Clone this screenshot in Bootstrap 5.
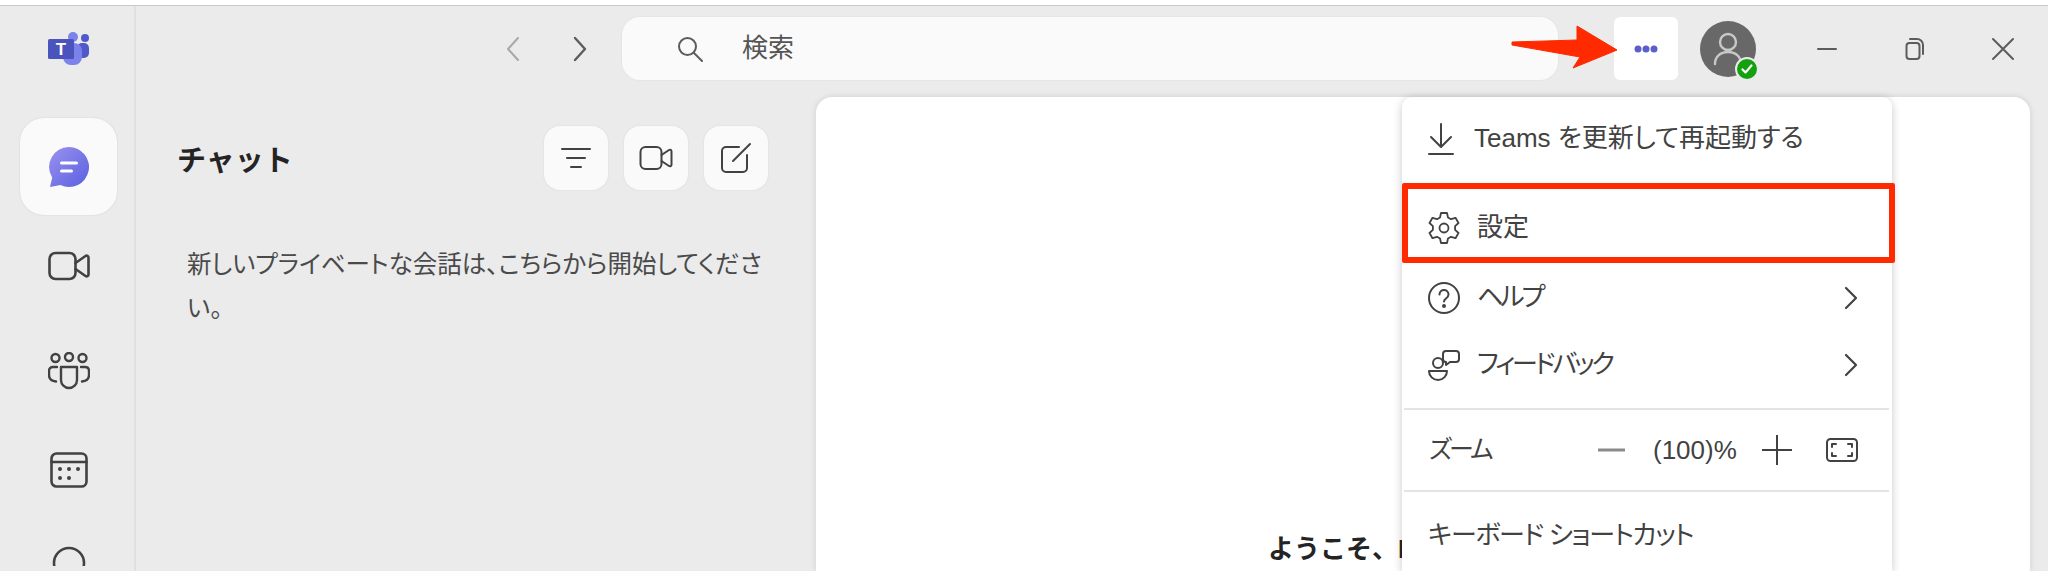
<!DOCTYPE html>
<html lang="ja">
<head>
    <meta charset="UTF-8">
    <meta name="viewport" content="width=device-width, initial-scale=1.0">
    <title>Teams</title>
    <link href="https://cdn.jsdelivr.net/npm/bootstrap@5.3.0/dist/css/bootstrap.min.css" rel="stylesheet">
    <style>
        html, body { height: 100%; overflow: hidden; }
        body { background: #ebebeb; color: #424242; font-family: "Liberation Sans", "Noto Sans CJK JP", sans-serif; font-size: 26px; font-feature-settings: "palt"; }
        svg { display: block; }
        .ico { fill: none; stroke: #424242; stroke-width: 2; stroke-linecap: round; stroke-linejoin: round; }
        .thin { stroke: #5c5c5c; }
        .top-strip { height: 6px; background: #fff; border-bottom: 1px solid #c9c9c9; flex: none; }
        .app-body { min-height: 0; overflow: hidden; }
        .rail { width: 136px; flex: none; border-right: 2px solid #e0e0e0; overflow: hidden; }
        .rail-logo { height: 86px; flex: none; padding-left: 3px; }
        .rail-item { width: 97px; height: 97px; margin-bottom: 5px; margin-left: 20px; flex: none; }
        .rail-item.active { background: #fafafa; border-radius: 24px; box-shadow: 0 0 2px rgba(0,0,0,.12); }
        .rail-item.gap-sm { margin-bottom: 2px; }
        .rail-item.gap-lg { margin-bottom: 8px; }
        .rail-last { height: 40px; padding-top: 19px; overflow: hidden; }
        .rail-spacer { height: 26px; flex: none; }
        .top-bar { height: 91px; padding-left: 357px; padding-bottom: 6px; flex: none; }
        .nav-btn { width: 40px; margin-right: 27px; }
        .search-box { width: 936px; height: 63px; margin-left: -5px; background: #fafafa; border-radius: 18px; padding-left: 55px; gap: 39px; color: #555; box-shadow: 0 0 2px rgba(0,0,0,.08); }
        .more-btn { width: 64px; height: 63px; margin-left: 56px; background: #fff; border-radius: 6px; }
        .avatar { width: 56px; height: 56px; margin-left: 22px; background: #686868; border-radius: 50%; position: relative; }
        .avatar-status { position: absolute; right: -3px; bottom: -4px; width: 24px; height: 24px; border-radius: 50%; background: #13a10e; border: 2px solid #ebebeb; }
        .win-btn { width: 88px; }
        .win-first { margin-left: 27px; }
        .content-row { min-height: 0; }
        .chat-pane { width: 680px; flex: none; }
        .chat-head { padding: 29px 48px 0 41px; }
        .chat-title { font-size: 29px; font-weight: 700; color: #242424; font-feature-settings: normal; margin-top: 7px; }
        .tool-btn { width: 64px; height: 64px; background: #fafafa; border-radius: 16px; box-shadow: 0 0 2px rgba(0,0,0,.1); }
        .chat-hint { padding: 0 45px 0 51px; margin-top: 53px; font-size: 24.500px; line-height: 44px; color: #4a4a4a; }
        .main-pane { width: 1214px; background: #fff; border-radius: 16px 16px 0 0; box-shadow: 0 0 6px rgba(0,0,0,.12); }
        .welcome { padding: 433px 0 0 452px; font-weight: 700; color: #242424; white-space: nowrap; font-feature-settings: normal; overflow: hidden; height: 474px; }
        .menu-pop.dropdown-menu { left: 586px; top: 0; width: 490px; height: 474px; padding: 8px 0 0; border: 0; border-radius: 10px 10px 0 0; box-shadow: 0 2px 10px rgba(0,0,0,.22); color: #424242; font-size: 26px; }
        .menu-row.dropdown-item { height: 67px; padding: 0 26px; gap: 17px; color: #424242; white-space: nowrap; }
        .menu-row.spaced { margin-bottom: 22px; gap: 20px; }
        .menu-row.shift-down { margin-top: 3px; }
        .tight { letter-spacing: -3px; }
        .menu-rule.dropdown-divider { margin: 0; border-top: 2px solid #e4e4e4; width: 485px; margin-left: 2px; opacity: 1; }
        .rule-a { margin-top: 10px !important; }
        .zoom-row { height: 80px; padding: 0 34px 0 27px; font-size: 25px; }
        .zoom-label { width: 169px; }
        .zoom-value { width: 84px; margin: 0 25px 0 28px; white-space: nowrap; font-size: 26px; }
        .zoom-fit { margin-left: 34px; }
        .row-kbd.dropdown-item { margin-top: 10px; letter-spacing: -1.300px; }
        .menu-arrow { margin-right: 8px; }
        .red-box { position: absolute; left: 0; top: 86px; width: 493px; height: 80px; border: 6px solid #ff2a00; border-radius: 2px; pointer-events: none; }
        .red-arrow { position: absolute; left: 1505px; top: 20px; }
    </style>
</head>
<body class="d-flex flex-column">
    <div class="top-strip"></div>
    <div class="app-body d-flex flex-grow-1">
        <!-- 左のレール -->
        <div class="rail d-flex flex-column">
            <div class="rail-logo d-flex align-items-center justify-content-center">
                <svg width="42" height="34" viewBox="0 0 42 34">
                    <circle cx="37" cy="6" r="4" fill="#5059c9"/>
                    <rect x="29" y="11" width="12" height="15" rx="5" fill="#5059c9"/>
                    <circle cx="25" cy="5" r="5" fill="#7b83eb"/>
                    <rect x="15" y="11" width="19" height="22" rx="8" fill="#7b83eb"/>
                    <rect x="0" y="7" width="26" height="20" rx="1.500" fill="#4b53bc"/>
                    <text x="13" y="23" text-anchor="middle" font-family="Liberation Sans" font-weight="700" font-size="17" fill="#fff">T</text>
                </svg>
            </div>
            <div class="rail-spacer"></div>
            <div class="rail-item active gap-sm d-flex align-items-center justify-content-center">
                <svg width="42" height="42" viewBox="0 0 42 42">
                    <defs><linearGradient id="chatGrad" x1="0" y1="0" x2="1" y2="1"><stop offset="0" stop-color="#9a92ee"/><stop offset="1" stop-color="#5a5fe0"/></linearGradient></defs>
                    <path d="M21 1a20 20 0 1 1-8.500 38.100L2 41l2.200-9.500A20 20 0 0 1 21 1z" fill="url(#chatGrad)"/>
                    <path d="M13.500 17h15M13.500 25h10" stroke="#fff" stroke-width="3" stroke-linecap="round"/>
                </svg>
            </div>
            <div class="rail-item gap-lg d-flex align-items-center justify-content-center">
                <svg class="ico" width="42" height="30" viewBox="0 0 42 30"><rect x="1.500" y="2" width="26" height="26" rx="6" stroke-width="2.600"/><path d="M27.500 12l10-7c1.400-.9 3 0 3 1.600v16.800c0 1.600-1.600 2.500-3 1.600l-10-7" stroke-width="2.600"/></svg>
            </div>
            <div class="rail-item gap-sm d-flex align-items-center justify-content-center">
                <svg class="ico" width="42" height="38" viewBox="0 0 42 38"><circle cx="21" cy="5" r="4" stroke-width="2.400"/><circle cx="7.500" cy="6" r="4" stroke-width="2.400"/><circle cx="34.500" cy="6" r="4" stroke-width="2.400"/><path d="M13 15h16v13a8 8 0 0 1-16 0z" stroke-width="2.400"/><path d="M9 15H5c-2.500 0-4 1.500-4 4v4c0 3.500 2.500 6 7 6.500M33 15h4c2.500 0 4 1.500 4 4v4c0 3.500-2.500 6-7 6.500" stroke-width="2.400"/></svg>
            </div>
            <div class="rail-item gap-lg d-flex align-items-center justify-content-center">
                <svg class="ico" width="38" height="36" viewBox="0 0 38 36"><rect x="1.500" y="1.500" width="35" height="33" rx="5" stroke-width="2.600"/><path d="M1.500 10h35" stroke-width="2.600"/><g fill="#424242" stroke="none"><circle cx="10" cy="17" r="2"/><circle cx="19" cy="17" r="2"/><circle cx="28" cy="17" r="2"/><circle cx="10" cy="26" r="2"/><circle cx="19" cy="26" r="2"/></g></svg>
            </div>
            <div class="rail-item rail-last d-flex justify-content-center">
                <svg class="ico" width="36" height="36" viewBox="0 0 36 36"><circle cx="18" cy="18" r="15" stroke-width="2.600"/></svg>
            </div>
        </div>

        <div class="flex-grow-1 d-flex flex-column">
            <!-- 上のバー -->
            <div class="top-bar d-flex align-items-center">
                <div class="nav-btn d-flex justify-content-center">
                    <svg class="ico" width="16" height="26" viewBox="0 0 16 26" style="stroke:#a8a8a8"><path d="M13 2L3 13l10 11"/></svg>
                </div>
                <div class="nav-btn d-flex justify-content-center">
                    <svg class="ico thin" width="16" height="26" viewBox="0 0 16 26"><path d="M3 2l10 11L3 24" stroke-width="2.400"/></svg>
                </div>
                <div class="search-box d-flex align-items-center">
                    <svg class="ico thin" width="26" height="26" viewBox="0 0 26 26"><circle cx="10.500" cy="10.500" r="8.500"/><path d="M17 17l8 8"/></svg>
                    <span>検索</span>
                </div>
                <div class="more-btn d-flex align-items-center justify-content-center">
                    <svg width="24" height="8" viewBox="0 0 24 8" fill="#5b5fc7"><circle cx="4" cy="4" r="3.500"/><circle cx="12" cy="4" r="3.500"/><circle cx="20" cy="4" r="3.500"/></svg>
                </div>
                <div class="avatar d-flex align-items-center justify-content-center">
                    <svg class="ico" width="30" height="34" viewBox="0 0 30 34" style="stroke:#c8c8c8"><circle cx="15" cy="10" r="8" stroke-width="2.400"/><path d="M2 32c0-7 5-12 13-12s13 5 13 12" stroke-width="2.400"/></svg>
                    <div class="avatar-status d-flex align-items-center justify-content-center">
                        <svg width="12" height="10" viewBox="0 0 12 10"><path d="M1.500 5.500l3 3 6-7" fill="none" stroke="#fff" stroke-width="2.200" stroke-linecap="round" stroke-linejoin="round"/></svg>
                    </div>
                </div>
                <div class="win-btn win-first d-flex justify-content-center">
                    <svg class="ico thin" width="20" height="4" viewBox="0 0 20 4"><path d="M1 2h18"/></svg>
                </div>
                <div class="win-btn d-flex justify-content-center">
                    <svg class="ico thin" width="20" height="24" viewBox="0 0 20 24"><rect x="1.500" y="6" width="13" height="16" rx="3"/><path d="M5 2h7a6 6 0 0 1 6 6v9"/></svg>
                </div>
                <div class="win-btn d-flex justify-content-center">
                    <svg class="ico thin" width="24" height="24" viewBox="0 0 24 24"><path d="M2 2l20 20M22 2L2 22"/></svg>
                </div>
            </div>

            <div class="content-row d-flex flex-grow-1">
                <!-- チャット一覧 -->
                <div class="chat-pane">
                    <div class="chat-head d-flex align-items-center justify-content-between">
                        <div class="chat-title">チャット</div>
                        <div class="d-flex gap-3">
                            <div class="tool-btn d-flex align-items-center justify-content-center">
                                <svg class="ico" width="30" height="24" viewBox="0 0 30 24"><path d="M1 3h28M6 12h18M10 21h10"/></svg>
                            </div>
                            <div class="tool-btn d-flex align-items-center justify-content-center">
                                <svg class="ico" width="34" height="26" viewBox="0 0 34 26"><rect x="1.500" y="2" width="21" height="22" rx="5"/><path d="M22.500 10l7.500-5c1.300-.8 2.500 0 2.500 1.500v13c0 1.500-1.200 2.300-2.500 1.500l-7.500-5"/></svg>
                            </div>
                            <div class="tool-btn d-flex align-items-center justify-content-center">
                                <svg class="ico" width="32" height="32" viewBox="0 0 32 32"><path d="M19 5H6a4 4 0 0 0-4 4v17a4 4 0 0 0 4 4h17a4 4 0 0 0 4-4V13"/><path d="M13 19L30 2"/></svg>
                            </div>
                        </div>
                    </div>
                    <div class="chat-hint">新しいプライベートな会話は、こちらから開始してください。</div>
                </div>

                <!-- メイン -->
                <div class="main-pane position-relative">
                    <div class="welcome">ようこそ、I</div>
                    <div class="dropdown-menu show menu-pop">
                        <a class="dropdown-item menu-row spaced d-flex align-items-center" href="#">
                            <svg class="ico" width="26" height="32" viewBox="0 0 26 32"><path d="M13 1v22M3 14l10 10 10-10M1 31h24"/></svg>
                            <span>Teams を更新して再起動する</span>
                        </a>
                        <a class="dropdown-item menu-row d-flex align-items-center" href="#">
                            <svg class="ico" width="32" height="34" viewBox="0 0 32 34"><path d="M13 2h6l1 4.500 3 1.700 4.500-1.400 3 5.200-3.400 3.200v3.600l3.400 3.200-3 5.200-4.500-1.400-3 1.700-1 4.500h-6l-1-4.500-3-1.700-4.500 1.400-3-5.200 3.400-3.200v-3.600L1.500 12l3-5.200L9 8.200l3-1.700z" stroke-width="1.800"/><circle cx="16" cy="17" r="4.500" stroke-width="1.800"/></svg>
                            <span>設定</span>
                        </a>
                        <a class="dropdown-item menu-row shift-down d-flex align-items-center" href="#">
                            <svg class="ico" width="32" height="32" viewBox="0 0 32 32"><circle cx="16" cy="16" r="15"/><path d="M11.500 12.500c0-6 9-6 9 0 0 4-4.500 4-4.500 7"/><circle cx="16" cy="24" r="1" fill="#424242"/></svg>
                            <span class="flex-grow-1 tight">ヘルプ</span>
                            <svg class="ico menu-arrow" width="14" height="24" viewBox="0 0 14 24"><path d="M2 2l10 10L2 22" stroke-width="2.200"/></svg>
                        </a>
                        <a class="dropdown-item menu-row d-flex align-items-center" href="#">
                            <svg class="ico" width="32" height="32" viewBox="0 0 32 32"><circle cx="10" cy="14" r="5"/><path d="M1 22h18c0 5-4 9-9 9s-9-4-9-9z"/><path d="M18 2h10a3 3 0 0 1 3 3v5a3 3 0 0 1-3 3h-6l-4 3v-3a3 3 0 0 1-3-3V5a3 3 0 0 1 3-3z"/></svg>
                            <span class="flex-grow-1 tight">フィードバック</span>
                            <svg class="ico menu-arrow" width="14" height="24" viewBox="0 0 14 24"><path d="M2 2l10 10L2 22" stroke-width="2.200"/></svg>
                        </a>
                        <hr class="dropdown-divider menu-rule rule-a">
                        <div class="zoom-row d-flex align-items-center">
                            <span class="zoom-label tight">ズーム</span>
                            <svg width="27" height="4" viewBox="0 0 27 4"><path d="M0 2h27" stroke="#8a8a8a" stroke-width="3"/></svg>
                            <span class="zoom-value">(100)%</span>
                            <svg class="ico" width="30" height="30" viewBox="0 0 30 30"><path d="M15 0v30M0 15h30"/></svg>
                            <svg class="ico zoom-fit" width="32" height="24" viewBox="0 0 32 24"><rect x="1" y="1" width="30" height="22" rx="3.500"/><path d="M6 9V6h4M22 6h4v3M26 15v3h-4M10 18H6v-3"/></svg>
                        </div>
                        <hr class="dropdown-divider menu-rule">
                        <a class="dropdown-item menu-row row-kbd d-flex align-items-center" href="#">キーボード ショートカット</a>
                        <div class="red-box"></div>
                    </div>
                </div>
            </div>
        </div>
    </div>
    <svg class="red-arrow" width="120" height="56" viewBox="0 0 120 56">
        <path d="M7 22L72 20L72 6L112 30L68 48L75 37L7 25Z" fill="#ff2a00" stroke="#ff2a00" stroke-width="1" stroke-linejoin="round"/>
    </svg>
</body>
</html>
